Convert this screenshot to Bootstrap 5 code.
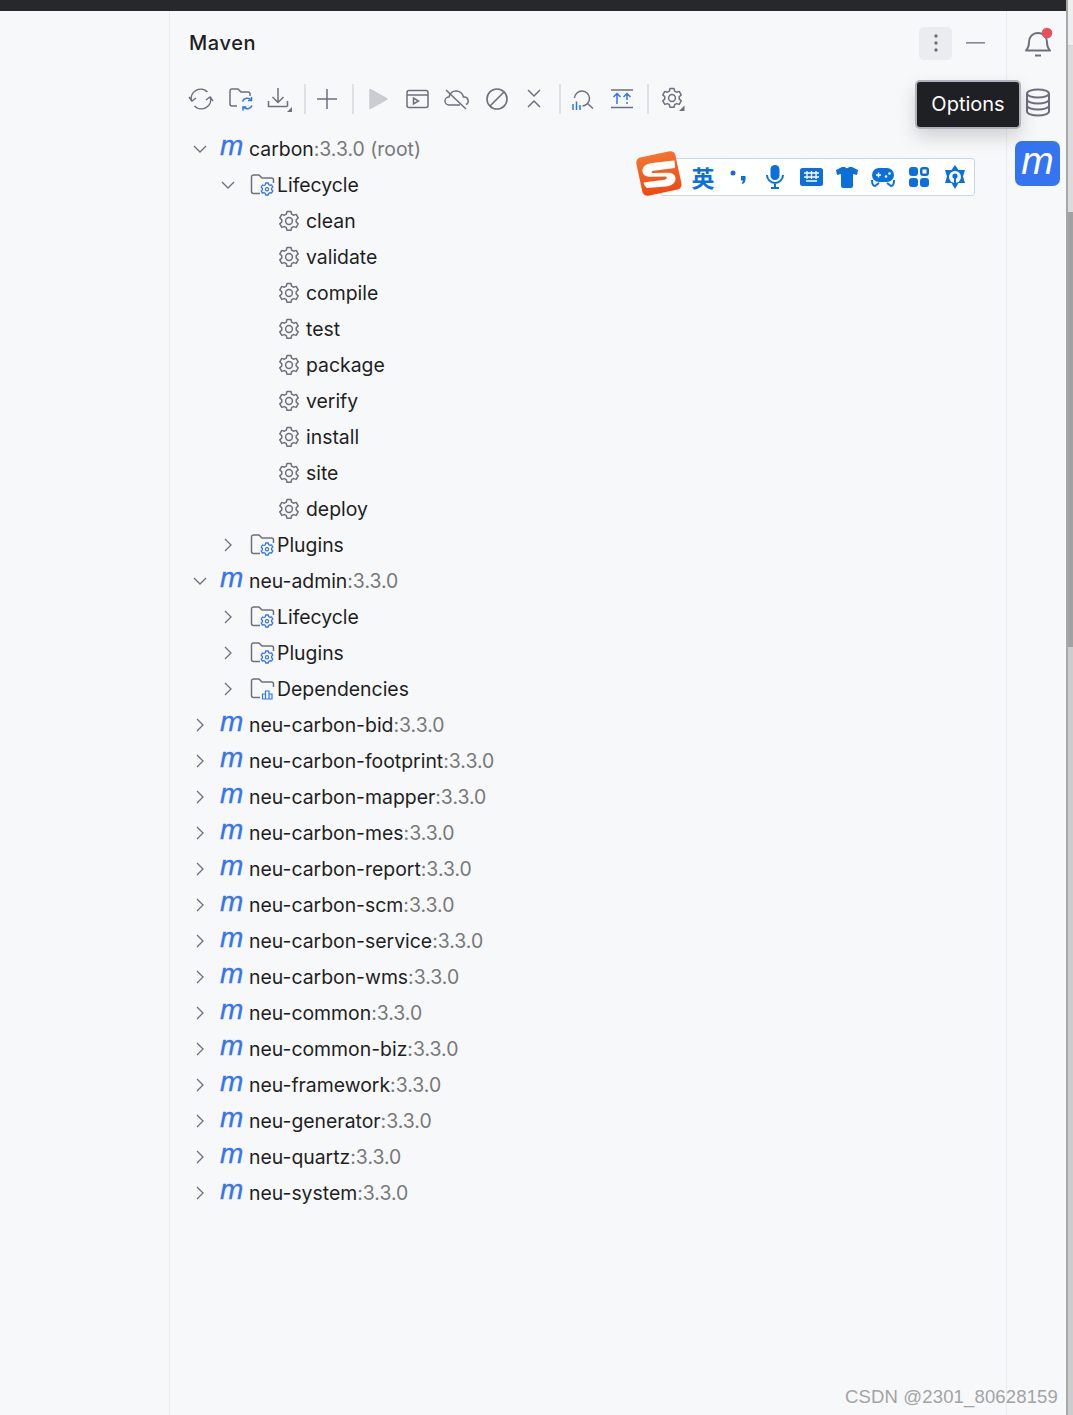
<!DOCTYPE html>
<html lang="en">
<head>
<meta charset="UTF-8">
<title>Maven</title>
<link rel="stylesheet" href="https://cdn.jsdelivr.net/npm/bootstrap@5.3.0/dist/css/bootstrap.min.css">
<style>
  html, body { height: 100%; }
  body { background: #f7f8fa; font-family: Inter, "Noto Sans", sans-serif; font-size: 19.4px; color: #1e1f22; overflow: hidden; }
  .ij-app { width: 1066px; flex: none; }
  .ij-top { height: 11px; background: #26282c; }
  .ij-shell { height: 1404px; position: relative; }
  .ij-left { width: 170px; border-right: 1px solid #ebecf0; }
  .ij-main { width: 836px; }
  .ij-side { width: 60px; border-left: 1px solid #ebecf0; }
  .ij-scroll { width: 7px; height: 1415px; background: #cdcdcd; border-left: 2px solid #a8a8a8; }
  .ij-sc-a { height: 46px; background: #eeeeee; border-bottom: 1px solid #d4d4d4; }
  .ij-sc-b { height: 166px; background: #dcdcdc; }
  .ij-sc-thumb { height: 435px; background: #a2a2a2; }
  .ij-title { height: 64px; padding: 0 21px 0 19px; }
  .ij-title-text { font-size: 20px; font-weight: 500; letter-spacing: .6px; }
  .ij-title-btns { gap: 14px; }
  .ij-opt { width: 33px; height: 33px; background: #ebecf0; border-radius: 5px; }
  .ij-toolbar { padding: 2px 0 0 11.5px; height: 46px; }
  .ij-tool { width: 39.5px; height: 30px; flex: none; }
  .ij-sep { width: 2px; height: 30px; background: #dfe1e5; flex: none; }
  .ij-sep-1 { margin: 0 1.5px 0 4px; }
  .ij-sep-2 { margin: 0 4.5px 0 5px; }
  .ij-sep-3 { margin: 0 2.5px 0 2.5px; }
  .ij-sep-4 { margin: 0 4.5px 0 4.5px; }
  .ij-tool-x { margin-left: -2px; margin-right: 2px; }
  .ij-tree { padding-top: 10px; }
  .ij-row { height: 36px; line-height: 36px; white-space: nowrap; }
  .ij-d1 { padding-left: 22px; }
  .ij-d2 { padding-left: 50px; }
  .ij-d3 { padding-left: 108px; }
  .ij-arrow { width: 16px; height: 16px; margin-right: 12px; flex: none; }
  .ij-d2 .ij-arrow { margin-right: 14px; }
  .ij-mvn { font-family: "Liberation Sans", sans-serif; font-style: italic; font-size: 28px; line-height: 28px; color: #3574f0; width: 29px; flex: none; margin-top: -7px; -webkit-text-stroke: .3px #3574f0; }
  .ij-folder { width: 26px; height: 26px; flex: none; margin-right: 1px; }
  .ij-gear { width: 22px; height: 22px; flex: none; margin-right: 6px; }
  .ij-ver { color: #787878; }
  .ij-tip { position: absolute; left: 915px; top: 69px; width: 106px; height: 49px; background: #1f2024; color: #fff; border: 2px solid #b0b3bf; border-radius: 5px; box-shadow: 0 8px 18px rgba(0,0,0,.16); font-size: 20px; line-height: 45px; text-align: center; }
  .ij-sogou { position: absolute; left: 660px; top: 147px; width: 315px; height: 38px; background: #fff; border: 1px solid #c7d7ea; border-radius: 3px; padding-left: 24px; color: #0b6fdc; }
  .ij-sogou-cell { width: 36px; height: 36px; font-weight: 700; font-family: "Noto Sans CJK SC", sans-serif; font-size: 23px; line-height: 1; }
  .ij-logo { position: absolute; left: 634px; top: 139px; width: 50px; height: 48px; }
  .ij-bell { margin: 16px 0 0 16px; }
  .ij-db { margin: 29px 0 0 18px; }
  .ij-m-btn { width: 45px; height: 45px; border-radius: 7px; background: #3574f0; color: #fff; font-family: "Liberation Sans", sans-serif; font-style: italic; font-size: 39px; line-height: 39px; text-align: center; margin: 23px 0 0 8px; }
  .ij-mark { position: absolute; right: 8px; bottom: 4px; font-family: "Liberation Sans", sans-serif; font-size: 18.5px; color: #a3a3a3; letter-spacing: .15px; }
</style>
</head>
<body>
<svg width="0" height="0" class="position-absolute">
  <defs>
    <linearGradient id="sgLogo" x1="0" y1="0" x2="0" y2="1"><stop offset="0" stop-color="#f2742e"/><stop offset="1" stop-color="#f04a12"/></linearGradient>
    <symbol id="i-down" viewBox="0 0 16 16"><path d="M2 5l6 6 6-6" fill="none" stroke="#6c707e" stroke-width="1.3"/></symbol>
    <symbol id="i-right" viewBox="0 0 16 16"><path d="M5 2l6 6-6 6" fill="none" stroke="#6c707e" stroke-width="1.3"/></symbol>
    <symbol id="i-folder" viewBox="0 0 26 26">
      <path d="M10 21.500H3.500a2 2 0 0 1-2-2V5a2 2 0 0 1 2-2h5.500l3 3h9.500a2 2 0 0 1 2 2v3" fill="none" stroke="#6c707e" stroke-width="1.500"/>
    </symbol>
    <symbol id="i-gear" viewBox="0 0 22 22">
      <path d="M9 1.500h4l.7 2.700 1.800 1 2.700-.8 2 3.500-2 1.900v2.200l2 1.900-2 3.500-2.700-.8-1.800 1-.7 2.700H9l-.7-2.700-1.800-1-2.700.8-2-3.500 2-1.900V9.800l-2-1.900 2-3.500 2.700.8 1.800-1z" fill="none" stroke="#6c707e" stroke-width="1.500" stroke-linejoin="round"/>
      <circle cx="11" cy="11" r="3.400" fill="none" stroke="#6c707e" stroke-width="1.500"/>
    </symbol>
    <symbol id="i-bgear" viewBox="0 0 14 14">
      <path d="M5.700 1h2.600l.4 1.600 1.200.7 1.600-.5 1.300 2.300-1.200 1.200v1.400l1.200 1.200-1.300 2.300-1.600-.5-1.200.7-.4 1.600H5.700l-.4-1.600-1.200-.7-1.600.5L1.200 9.100l1.200-1.200V6.500L1.200 5.300l1.300-2.300 1.600.5 1.200-.7z" fill="#f7f8fa" stroke="#3574f0" stroke-width="1.300" stroke-linejoin="round"/>
      <circle cx="7" cy="7.200" r="1.600" fill="none" stroke="#3574f0" stroke-width="1.200"/>
    </symbol>
  </defs>
</svg>

<div class="d-flex">
<div class="ij-app">
<div class="ij-top"></div>
<div class="ij-shell d-flex">
  <div class="ij-left"></div>
  <div class="ij-main">
    <div class="ij-title d-flex align-items-center justify-content-between">
      <span class="ij-title-text">Maven</span>
      <div class="ij-title-btns d-flex align-items-center">
        <div class="ij-opt d-flex align-items-center justify-content-center">
          <svg width="4" height="20" viewBox="0 0 4 20"><circle cx="2" cy="3" r="1.700" fill="#6c707e"/><circle cx="2" cy="10" r="1.700" fill="#6c707e"/><circle cx="2" cy="17" r="1.700" fill="#6c707e"/></svg>
        </div>
        <svg width="19" height="2" viewBox="0 0 19 2"><rect width="19" height="1.600" fill="#85888f"/></svg>
      </div>
    </div>
    <div class="ij-toolbar d-flex align-items-center">
      <div class="ij-tool d-flex align-items-center justify-content-center"><svg width="26" height="26" viewBox="0 0 26 26" fill="none" stroke="#6c707e" stroke-width="1.500"><path d="M3.500 15a9.500 9.500 0 0 1 16-9"/><path d="M22.500 11a9.500 9.500 0 0 1-16 9"/><path d="M1 11l3 4 4-3"/><path d="M25 15l-3-4-4 3"/></svg></div>
      <div class="ij-tool d-flex align-items-center justify-content-center"><svg width="26" height="26" viewBox="0 0 26 26" fill="none"><path d="M9 20H4a2 2 0 0 1-2-2V5a2 2 0 0 1 2-2h6l3 3h7a2 2 0 0 1 2 2v2" stroke="#6c707e" stroke-width="1.500"/><path d="M14.500 15.500a5 5 0 0 1 8.500-1.500M24 19.500a5 5 0 0 1-8.500 1.500" stroke="#3574f0" stroke-width="1.600"/><path d="M23.500 11v3.500H20M15 24.500V21h3.500" stroke="#3574f0" stroke-width="1.600"/></svg></div>
      <div class="ij-tool d-flex align-items-center justify-content-center"><svg width="26" height="26" viewBox="0 0 26 26" fill="none" stroke="#6c707e" stroke-width="1.500"><path d="M11 2v14M5.500 11l5.500 5.500 5.500-5.500"/><path d="M1.500 15v5.500h19"/><path d="M20.500 20.500V15"/><path d="M20 26l5-5v5z" fill="#6c707e" stroke="none"/></svg></div>
      <div class="ij-sep ij-sep-1"></div>
      <div class="ij-tool d-flex align-items-center justify-content-center"><svg width="22" height="22" viewBox="0 0 22 22" stroke="#6c707e" stroke-width="1.500"><path d="M11 1v20M1 11h20"/></svg></div>
      <div class="ij-sep ij-sep-2"></div>
      <div class="ij-tool d-flex align-items-center justify-content-center"><svg width="22" height="24" viewBox="0 0 22 24"><path d="M3 2.500v19L20 12z" fill="#c9ccd2" stroke="#c9ccd2" stroke-width="1.500" stroke-linejoin="round"/></svg></div>
      <div class="ij-tool d-flex align-items-center justify-content-center"><svg width="23" height="20" viewBox="0 0 23 20" fill="none" stroke="#6c707e" stroke-width="1.500"><rect x="1" y="1.500" width="21" height="17" rx="2"/><path d="M1 6h21"/><path d="M7.500 9v6l5-3z"/></svg></div>
      <div class="ij-tool d-flex align-items-center justify-content-center"><svg width="26" height="22" viewBox="0 0 26 22" fill="none" stroke="#6c707e" stroke-width="1.500"><path d="M5 17a4 4 0 0 1 0-8c1-4 4-6 7-6 4 0 6.500 2.500 7.500 6a4 4 0 0 1 2.500 7.500"/><path d="M2 2l20 19"/><path d="M5 17h11"/></svg></div>
      <div class="ij-tool d-flex align-items-center justify-content-center"><svg width="24" height="24" viewBox="0 0 24 24" fill="none" stroke="#6c707e" stroke-width="1.600"><circle cx="12" cy="12" r="10"/><path d="M5 19L19 5"/></svg></div>
      <div class="ij-tool ij-tool-x d-flex align-items-center justify-content-center"><svg width="16" height="20" viewBox="0 0 16 20" fill="none" stroke="#6c707e" stroke-width="1.500"><path d="M2 1l6 6 6-6M2 18l6-6 6 6"/></svg></div>
      <div class="ij-sep ij-sep-3"></div>
      <div class="ij-tool d-flex align-items-center justify-content-center"><svg width="24" height="24" viewBox="0 0 24 24" fill="none"><path d="M3.500 11a7.500 7.500 0 1 1 8 8M16.500 16.500L22 21.500" stroke="#6c707e" stroke-width="1.500"/><path d="M2 17v6M5.500 14.500v8.500M9 18v5" stroke="#3574f0" stroke-width="1.500"/></svg></div>
      <div class="ij-tool d-flex align-items-center justify-content-center"><svg width="22" height="20" viewBox="0 0 22 20" fill="none" stroke-width="1.500"><path d="M0 1h22M0 18.500h22" stroke="#6c707e"/><path d="M6 15V5M2.500 8L6 4.500 9.500 8" stroke="#3574f0"/><path d="M16 15v-2M16 11V5M12.500 8L16 4.500 19.500 8" stroke="#3574f0"/></svg></div>
      <div class="ij-sep ij-sep-4"></div>
      <div class="ij-tool d-flex align-items-center justify-content-center"><svg width="24" height="24" viewBox="0 0 24 24" fill="none"><path d="M9 1.500h4l.7 2.700 1.800 1 2.700-.8 2 3.500-2 1.900v2.200l2 1.900-2 3.500-2.700-.8-1.800 1-.7 2.700H9l-.7-2.700-1.800-1-2.700.8-2-3.500 2-1.900V9.800l-2-1.900 2-3.500 2.700.8 1.800-1z" stroke="#6c707e" stroke-width="1.500" stroke-linejoin="round"/><circle cx="11" cy="11" r="3.400" stroke="#6c707e" stroke-width="1.500"/><path d="M18 24l5.500-5.500V24z" fill="#6c707e"/></svg></div>
    </div>
    <div class="ij-tree" id="tree"></div>
  </div>
  <div class="ij-side d-flex flex-column align-items-start">
    <svg class="ij-bell" width="30" height="32" viewBox="0 0 30 32" fill="none"><path d="M3 23.500c2-2 3-4 3-8.500 0-5 3.500-9 9-9s9 4 9 9c0 4.500 1 6.500 3 8.500z" stroke="#6c707e" stroke-width="2" stroke-linejoin="round"/><path d="M12 28.500h6" stroke="#6c707e" stroke-width="2"/><circle cx="24" cy="6" r="5.300" fill="#e5505e"/></svg>
    <svg class="ij-db" width="26" height="30" viewBox="0 0 26 30" fill="none" stroke="#6c707e" stroke-width="2"><ellipse cx="13" cy="5.500" rx="11" ry="4"/><path d="M2 5.500v18c0 2.200 5 4 11 4s11-1.800 11-4v-18M2 11.500c0 2.200 5 4 11 4s11-1.800 11-4M2 17.500c0 2.200 5 4 11 4s11-1.800 11-4"/></svg>
    <div class="ij-m-btn">m</div>
  </div>

  <div class="ij-tip">Options</div>
  <div class="ij-sogou d-flex align-items-center">
    <div class="ij-sogou-cell d-flex align-items-center justify-content-center">英</div>
    <div class="ij-sogou-cell d-flex align-items-center justify-content-center"><svg width="24" height="22" viewBox="0 0 24 22"><circle cx="6" cy="7" r="2.500" fill="#0b6fdc"/><path d="M14 10h4.500v3.500c0 2-1 3.500-3 4.500l-1-1c1-.7 1.500-1.500 1.500-2.500h-2z" fill="#0b6fdc"/></svg></div>
    <div class="ij-sogou-cell d-flex align-items-center justify-content-center"><svg width="20" height="24" viewBox="0 0 20 24"><rect x="5.500" y="0" width="9" height="15" rx="4.500" fill="#0b6fdc"/><path d="M2 10a8 8 0 0 0 16 0M10 18v4M6 23h8" fill="none" stroke="#0b6fdc" stroke-width="2"/></svg></div>
    <div class="ij-sogou-cell d-flex align-items-center justify-content-center"><svg width="23" height="18" viewBox="0 0 23 18"><rect width="23" height="18" rx="2.500" fill="#0b6fdc"/><path d="M4 5h15M4 9h15M6 13h11M7 3v8M11.500 3v8M16 3v8" stroke="#fff" stroke-width="1.300"/></svg></div>
    <div class="ij-sogou-cell d-flex align-items-center justify-content-center"><svg width="22" height="22" viewBox="0 0 22 22"><path d="M6 1h3c.5 1.500 3.500 1.500 4 0h3l6 3-1 5-4-1v12c0 1-1 2-2 2H7c-1 0-2-1-2-2V8L1 9 0 4z" fill="#0b6fdc"/></svg></div>
    <div class="ij-sogou-cell d-flex align-items-center justify-content-center"><svg width="24" height="22" viewBox="0 0 24 22"><rect x="1" y="2" width="22" height="14" rx="7" fill="#0b6fdc"/><path d="M1 14c0 4 1 6 3 6l4-3M23 14c0 4-1 6-3 6l-4-3" fill="none" stroke="#0b6fdc" stroke-width="2"/><path d="M5 9h5M7.500 6.500v5" stroke="#fff" stroke-width="1.500"/><circle cx="15" cy="10.500" r="1.300" fill="#fff"/><circle cx="18.500" cy="7.500" r="1.300" fill="#fff"/></svg></div>
    <div class="ij-sogou-cell d-flex align-items-center justify-content-center"><svg width="20" height="20" viewBox="0 0 20 20" fill="#0b6fdc"><rect width="9" height="9" rx="3"/><rect x="11" width="9" height="9" rx="3"/><rect y="11" width="9" height="9" rx="3"/><rect x="11" y="11" width="9" height="9" rx="3"/><rect x="13.500" y="2.500" width="4" height="4" fill="#fff"/></svg></div>
    <div class="ij-sogou-cell d-flex align-items-center justify-content-center"><svg width="22" height="24" viewBox="0 0 22 24"><path d="M11 0l3.500 5H21l-2 6.500L21 18h-6.500L11 24l-3.500-6H1l2-6.500L1 5h6.500z" fill="#0b6fdc"/><circle cx="11" cy="12" r="6" fill="#fff"/><circle cx="11" cy="11" r="2.600" fill="#0b6fdc"/><path d="M11 12v7" stroke="#0b6fdc" stroke-width="2"/></svg></div>
  </div>
  <svg class="ij-logo" viewBox="0 0 50 48"><rect x="5" y="4" width="40" height="39" rx="5" fill="url(#sgLogo)" transform="rotate(-12 25 24)"/><path d="M40 10.500 18 13c-6 .7-10 4-9.500 8.500.4 3.700 3.500 5.300 8 5.300l14.500-.3c2.300 0 2.500 2.700-.5 3.200L9.500 32.500c.5 2.500 2 4.500 3.500 5.500l19-1.500c6-.6 10-4 9.500-8.500-.4-3.800-4-5.500-8.500-5.300l-14 .4c-2 0-2-2 .5-2.400l21.500-2.700c0-2.500-.2-5-.5-7.500z" fill="#fff"/></svg>
  <div class="ij-mark">CSDN @2301_80628159</div>
</div>
</div>
<div class="ij-scroll">
  <div class="ij-sc-a"></div>
  <div class="ij-sc-b"></div>
  <div class="ij-sc-thumb"></div>
</div>
</div>

<script>
  // [depth, name, version, expanded, badge]
  const rows = [
    [1, "carbon", ":3.3.0 (root)", true],
    [2, "Lifecycle", "", true, "gear"],
    ...["clean", "validate", "compile", "test", "package", "verify", "install", "site", "deploy"].map(n => [3, n]),
    [2, "Plugins", "", false, "gear"],
    [1, "neu-admin", ":3.3.0", true],
    [2, "Lifecycle", "", false, "gear"],
    [2, "Plugins", "", false, "gear"],
    [2, "Dependencies", "", false, "bars"],
    ...["neu-carbon-bid", "neu-carbon-footprint", "neu-carbon-mapper", "neu-carbon-mes", "neu-carbon-report",
        "neu-carbon-scm", "neu-carbon-service", "neu-carbon-wms", "neu-common", "neu-common-biz",
        "neu-framework", "neu-generator", "neu-quartz", "neu-system"].map(n => [1, n, ":3.3.0", false])
  ];

  function arrow(open) {
    return `<svg class="ij-arrow"><use href="#${open ? "i-down" : "i-right"}"/></svg>`;
  }

  function folder(badge) {
    const extra = badge === "gear"
      ? `<svg x="10" y="10" width="14" height="14" viewBox="0 0 14 14"><use href="#i-bgear"/></svg>`
      : `<path d="M12.500 23v-5h3v5zM15.500 23v-8h3.500v8zM19 23v-5h3v5z" fill="none" stroke="#3574f0" stroke-width="1.200"/>`;
    return `<svg class="ij-folder" viewBox="0 0 26 26"><use href="#i-folder"/>${extra}</svg>`;
  }

  document.getElementById("tree").innerHTML = rows.map(([depth, name, ver, open, badge]) => {
    if (depth === 3) {
      return `<div class="ij-row ij-d3 d-flex align-items-center"><svg class="ij-gear"><use href="#i-gear"/></svg><span>${name}</span></div>`;
    }
    if (depth === 2) {
      return `<div class="ij-row ij-d2 d-flex align-items-center">${arrow(open)}${folder(badge)}<span>${name}</span></div>`;
    }
    return `<div class="ij-row ij-d1 d-flex align-items-center">${arrow(open)}<span class="ij-mvn">m</span><span>${name}<span class="ij-ver">${ver}</span></span></div>`;
  }).join("");
</script>
</body>
</html>
